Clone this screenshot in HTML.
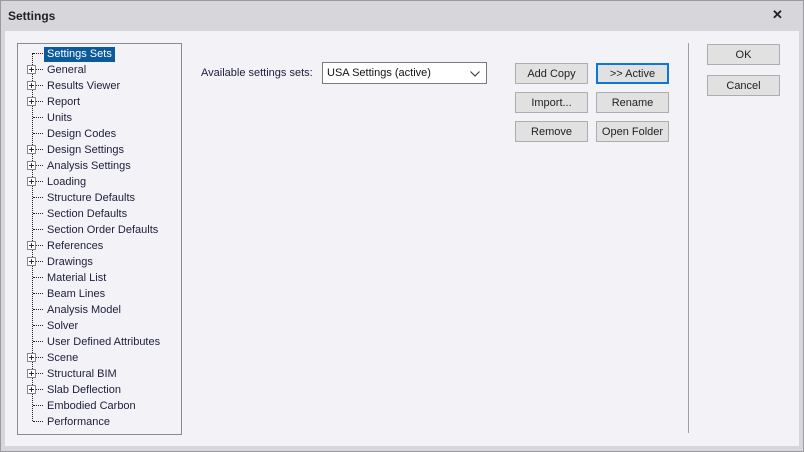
<!DOCTYPE html>
<html><head><style>
*{margin:0;padding:0;box-sizing:border-box}
body{width:804px;height:452px;overflow:hidden;background:#d6d6db;font-family:"Liberation Sans",sans-serif;font-size:11px;color:#1e1e3c;position:relative}
.frame{position:absolute;left:0;top:0;width:804px;height:452px;border:1px solid #9a9aa0;background:#d6d6db}
.title{position:absolute;left:8px;top:9px;font-weight:bold;font-size:12px;color:#222}
.close{position:absolute;left:772px;top:7px;font-size:13px;font-weight:bold;color:#222}
.content{position:absolute;left:5px;top:31px;width:794px;height:415px;background:#f2f2f7}
.tree{position:absolute;left:17px;top:43px;width:165px;height:392px;border:1px solid #8a8a90;background:#f2f2f7}
.vl{position:absolute;left:32px;top:53px;height:368px;border-left:1px dotted #222}
.item{position:absolute;left:47px;height:15px;line-height:15px;white-space:nowrap}
.hd{position:absolute;left:33px;width:10px;border-top:1px dotted #222}
.pb{position:absolute;left:27px;width:9px;height:9px;border:1px solid #888;background:#fff}
.pb:before{content:"";position:absolute;left:1px;top:3px;width:5px;height:1px;background:#333}
.pb:after{content:"";position:absolute;left:3px;top:1px;width:1px;height:5px;background:#333}
.sel{background:#0a5a9c;color:#fff;left:44px;padding:0 3px}
.btn{position:absolute;width:73px;height:21px;border:1px solid #adadad;background:#e1e1e1;text-align:center;line-height:21px;color:#222}
.label{position:absolute;left:201px;top:67px}
.combo{position:absolute;left:322px;top:62px;width:165px;height:22px;border:1px solid #7a7a7a;background:#fff;padding-left:4px;line-height:21px;color:#111}
.div{position:absolute;left:688px;top:43px;height:390px;border-left:1px solid #a0a0a0}
</style></head><body>
<div class="frame"></div>
<div class="title">Settings</div>
<div class="close">✕</div>
<div class="content"></div>
<div class="tree"></div>
<div class="vl"></div>
<div id="t"></div>
<div class="label">Available settings sets:</div>
<div class="combo">USA Settings (active)<svg style="position:absolute;right:6px;top:8px" width="10" height="6"><path d="M0.5 0.5L5 5L9.5 0.5" stroke="#333" fill="none"/></svg></div>
<div class="btn" style="left:515px;top:63px">Add Copy</div>
<div class="btn" style="left:596px;top:63px;border:2px solid #0a78d7;line-height:19px">&gt;&gt; Active</div>
<div class="btn" style="left:515px;top:92px">Import...</div>
<div class="btn" style="left:596px;top:92px">Rename</div>
<div class="btn" style="left:515px;top:121px">Remove</div>
<div class="btn" style="left:596px;top:121px">Open Folder</div>
<div class="div"></div>
<div class="btn" style="left:707px;top:44px">OK</div>
<div class="btn" style="left:707px;top:75px">Cancel</div>
<script>
var items=[["Settings Sets",0],["General",1],["Results Viewer",1],["Report",1],["Units",0],["Design Codes",0],["Design Settings",1],["Analysis Settings",1],["Loading",1],["Structure Defaults",0],["Section Defaults",0],["Section Order Defaults",0],["References",1],["Drawings",1],["Material List",0],["Beam Lines",0],["Analysis Model",0],["Solver",0],["User Defined Attributes",0],["Scene",1],["Structural BIM",1],["Slab Deflection",1],["Embodied Carbon",0],["Performance",0]];
var h="";
items.forEach(function(it,i){var c=53+i*16;
h+='<div class="hd" style="top:'+c+'px"></div>';
if(it[1])h+='<div class="pb" style="top:'+(c-4)+'px"></div>';
h+='<div class="item'+(i==0?' sel':'')+'" style="top:'+(c-6)+'px">'+it[0]+'</div>';});
document.getElementById("t").innerHTML=h;
</script>
</body></html>
